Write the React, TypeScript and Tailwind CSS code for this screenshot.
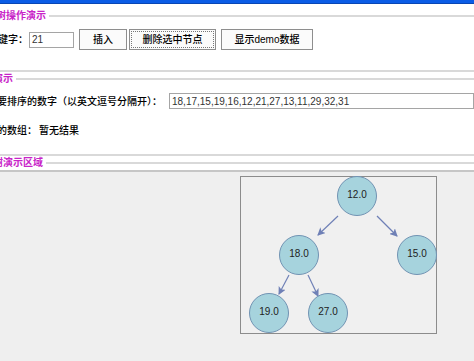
import React from 'react';

const nodes = [
  { label: '12.0', x: 117, y: 20 },
  { label: '18.0', x: 59, y: 79 },
  { label: '15.0', x: 177, y: 79 },
  { label: '19.0', x: 29, y: 137 },
  { label: '27.0', x: 88, y: 137 },
];

const edges = [
  { x1: 98, y1: 40, x2: 78, y2: 59 },
  { x1: 137, y1: 40, x2: 157, y2: 60 },
  { x1: 49, y1: 99, x2: 39, y2: 118 },
  { x1: 68, y1: 99, x2: 78, y2: 120 },
];

const Legend = ({ text, offset }: { text: string; offset: string }) => (
  <div className="flex items-center h-[12px]">
    <span className={`${offset} whitespace-nowrap font-bold text-[10px] leading-[12px] text-[#c824c8]`}>{text}</span>
    <div className="ml-[3px] flex-1 h-[2px] bg-[#d9d9d9]" />
  </div>
);

const Button = ({ children, focused }: { children: React.ReactNode; focused?: boolean }) => (
  <button className="h-[21px] border border-[#8e8e8e] bg-[#fbfbfb] p-[1px] text-[10px] font-medium text-black">
    <div
      className={`h-full flex items-center justify-center ${
        focused ? 'border border-dotted border-[#777]' : 'border border-transparent'
      }`}
    >
      {children}
    </div>
  </button>
);

export default function App() {
  return (
    <div className="w-[474px] h-[361px] overflow-hidden bg-white flex flex-col font-['Liberation_Sans','Noto_Sans_CJK_SC',sans-serif] text-[10px] text-black">
      <div className="h-[4px] bg-[#0a5ce6] border-b border-[#0846b4] shrink-0" />

      <div className="mt-[6px]">
        <Legend text="树操作演示" offset="-ml-[4px]" />
      </div>

      <div className="mt-[7px] flex items-center h-[21px]">
        <span className="-ml-[12px] whitespace-nowrap font-medium">关键字：</span>
        <input
          readOnly
          value="21"
          className="ml-[1px] w-[45px] h-[16px] border border-[#a5a5a5] px-[2px] text-[10px] text-[#333] outline-none"
        />
        <div className="ml-[5px] w-[46px] flex">
          <Button>
            <span className="w-[42px]">插入</span>
          </Button>
        </div>
        <div className="ml-[4px] flex">
          <Button focused>
            <span className="w-[81px]">删除选中节点</span>
          </Button>
        </div>
        <div className="ml-[5px] flex">
          <Button>
            <span className="w-[86px]">显示demo数据</span>
          </Button>
        </div>
      </div>

      <div className="mt-[20px] h-[2px] bg-[#d9d9d9]" />

      <div className="mt-[1px]">
        <Legend text="演示" offset="-ml-[7px]" />
      </div>

      <div className="mt-[8px] flex items-center h-[16px]">
        <span className="-ml-[3px] whitespace-nowrap font-medium">要排序的数字（以英文逗号分隔开）：</span>
        <input
          readOnly
          value="18,17,15,19,16,12,21,27,13,11,29,32,31"
          className="ml-[7px] flex-1 min-w-0 h-[16px] border border-[#a5a5a5] px-[2px] text-[10px] text-[#333] outline-none"
        />
      </div>

      <div className="mt-[15px] flex items-center h-[12px] font-medium">
        <span className="-ml-[3px] whitespace-nowrap">的数组：</span>
        <span className="ml-[2px]">暂无结果</span>
      </div>

      <div className="mt-[18px] h-[2px] bg-[#d9d9d9]" />

      <div className="mt-[1px]">
        <Legend text="树演示区域" offset="-ml-[7px]" />
      </div>

      <div className="mt-[1px] flex-1 border-t-2 border-[#c6c6c6] bg-[#efefef] pt-[4px] pl-[240px]">
        <div className="relative w-[197px] h-[158px] border border-[#8c8c8c] bg-[#f0f0f0]">
          <svg className="absolute -left-[1px] -top-[1px] overflow-visible" width="197" height="158">
            <defs>
              <marker id="arrow" markerWidth="8" markerHeight="8" refX="7" refY="4" orient="auto" markerUnits="userSpaceOnUse">
                <path d="M0,0 L8,4 L0,8 L2,4 Z" fill="#6f80b6" />
              </marker>
            </defs>
            {edges.map((e, i) => (
              <line key={i} x1={e.x1} y1={e.y1} x2={e.x2} y2={e.y2} stroke="#6f80b6" strokeWidth="1.2" markerEnd="url(#arrow)" />
            ))}
            {nodes.map(n => (
              <g key={n.label}>
                <circle cx={n.x} cy={n.y} r="19.5" fill="#a6d3dd" stroke="#7193b3" strokeWidth="1" />
                <text x={n.x} y={n.y + 1.5} textAnchor="middle" fontSize="10" fill="#222" fontFamily="Liberation Sans, sans-serif">
                  {n.label}
                </text>
              </g>
            ))}
          </svg>
        </div>
      </div>
    </div>
  );
}
